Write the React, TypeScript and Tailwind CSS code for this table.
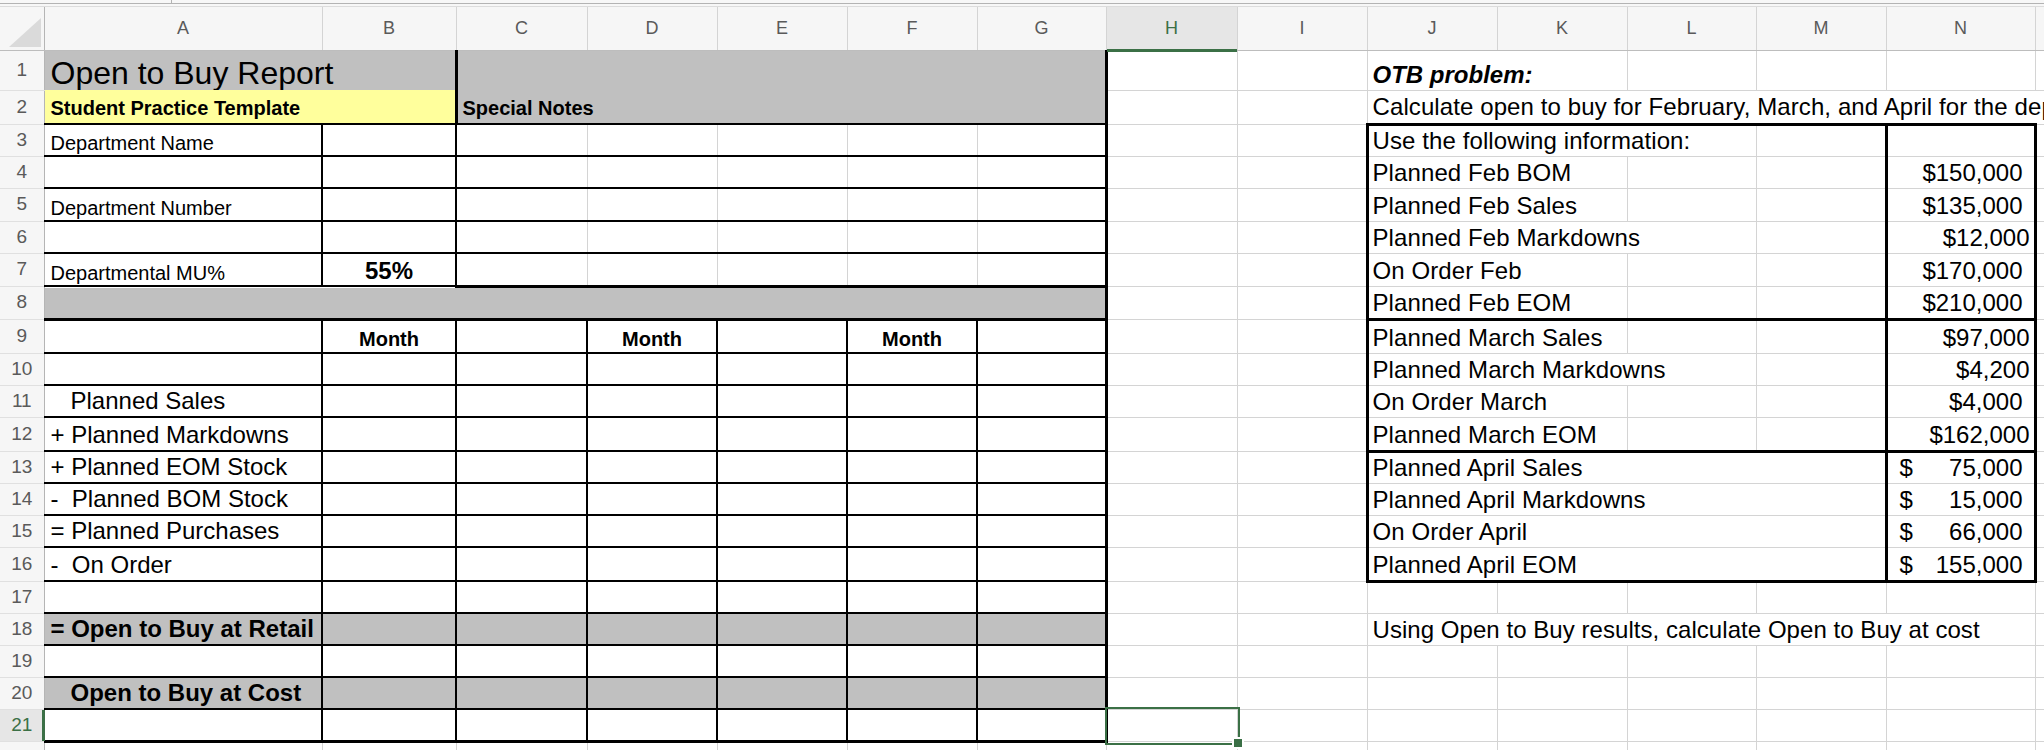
import React from "react";

const B2R = "border-r-2 border-r-black";
const B2B = "border-b-2 border-b-black";
const B3R = "border-r-[3px] border-r-black";
const B3B = "border-b-[3px] border-b-black";
const B3L = "border-l-[3px] border-l-black";
const B3T = "border-t-[3px] border-t-black";
const GRAY = "bg-[#c0c0c0]";

const COLS = [
  "w-[44px]", "w-[278px]", "w-[134px]", "w-[131px]", "w-[130px]", "w-[130px]", "w-[130px]", "w-[129px]",
  "w-[131px]", "w-[130px]", "w-[130px]", "w-[130px]", "w-[129px]", "w-[130px]", "w-[149px]", "w-[130px]",
];
const LETTERS = ["A", "B", "C", "D", "E", "F", "G", "H", "I", "J", "K", "L", "M", "N", "O"];
const ROW_H = [
  "h-[40px]", "h-[34px]", "h-[32px]", "h-[32px]", "h-[33px]", "h-[32px]", "h-[33px]", "h-[33px]", "h-[34px]", "h-[32px]", "h-[32px]",
  "h-[34px]", "h-[32px]", "h-[32px]", "h-[32px]", "h-[34px]", "h-[32px]", "h-[32px]", "h-[32px]", "h-[32px]", "h-[32px]", "h-[32px]",
];

const t20 = "text-[20px] leading-none pl-[6px] pb-[2px]";
const t24 = "text-[24px] leading-none pl-[6px] pb-[3px] whitespace-pre";
const t24b = "text-[24px] font-bold leading-none pl-[6px] pb-[3px] whitespace-pre";

type TdProps = { c?: string; span?: number; children?: React.ReactNode };

function Td({ c = "", span, children }: TdProps) {
  return (
    <td colSpan={span} className={`border border-[#d4d4d4] p-0 align-bottom whitespace-nowrap overflow-hidden ${c}`}>
      {children}
    </td>
  );
}

function RowHead({ n }: { n: number }) {
  const active = n === 21;
  return (
    <th
      className={`relative border border-[#e0e0e0] border-l-0 border-r-[#b5b5b5] p-0 text-center align-middle text-[19px] font-normal ${
        active ? "bg-[#e6e6e6] text-[#3b7046]" : "bg-[#f6f6f6] text-[#5a5a5a]"
      }`}
    >
      {n < 22 ? n : null}
      {active && <span className="absolute right-[-1px] top-0 bottom-0 w-[3px] bg-[#3b7046]" />}
    </th>
  );
}

type BoxRow = { label: string; span: number; value?: string; acct?: string; tight?: boolean; end?: boolean };

const BOX: BoxRow[] = [
  { label: "Use the following information:", span: 3 },
  { label: "Planned Feb BOM", span: 2, value: "$150,000" },
  { label: "Planned Feb Sales", span: 2, value: "$135,000" },
  { label: "Planned Feb Markdowns", span: 3, value: "$12,000", tight: true },
  { label: "On Order Feb", span: 2, value: "$170,000" },
  { label: "Planned Feb EOM", span: 2, value: "$210,000", end: true },
  { label: "Planned March Sales", span: 2, value: "$97,000", tight: true },
  { label: "Planned March Markdowns", span: 3, value: "$4,200", tight: true },
  { label: "On Order March", span: 2, value: "$4,000" },
  { label: "Planned March EOM", span: 2, value: "$162,000", tight: true, end: true },
  { label: "Planned April Sales", span: 4, acct: "75,000" },
  { label: "Planned April Markdowns", span: 4, acct: "15,000" },
  { label: "On Order April", span: 4, acct: "66,000" },
  { label: "Planned April EOM", span: 4, acct: "155,000", end: true },
];

function boxCells(i: number) {
  const r = BOX[i];
  const top = i === 0 ? B3T : "";
  const bot = r.end ? B3B : "";
  const rest = 4 - r.span;
  return (
    <>
      <Td span={r.span} c={`${B3L} ${top} ${bot} ${r.span === 4 ? B3R : ""}`}>
        <div className="text-[24px] tracking-[0.1px] leading-none pl-[4px] pb-[3px]">{r.label}</div>
      </Td>
      {Array.from({ length: rest }).map((_, k) => (
        <Td key={k} c={`${top} ${bot} ${k === rest - 1 ? B3R : ""}`} />
      ))}
      <Td c={`${B3R} ${top} ${bot}`}>
        {r.value && (
          <div className={`text-[24px] leading-none text-right pb-[3px] ${r.tight ? "pr-[4px]" : "pr-[11px]"}`}>{r.value}</div>
        )}
        {r.acct && (
          <div className="flex justify-between text-[24px] leading-none pb-[3px] pl-[12px] pr-[11px]">
            <span>$</span>
            <span>{r.acct}</span>
          </div>
        )}
      </Td>
      <Td />
    </>
  );
}

function plainRight(count: number) {
  return Array.from({ length: count }).map((_, k) => <Td key={`p${k}`} />);
}

function infoCells(label: string | null, val: React.ReactNode, last: boolean) {
  const bot = last ? B3B : B2B;
  return (
    <>
      <Td c={`${B2R} ${B2B}`}>{label && <div className={t20}>{label}</div>}</Td>
      <Td c={`${B2R} ${B2B}`}>{val}</Td>
      <Td c={bot} />
      <Td c={bot} />
      <Td c={bot} />
      <Td c={bot} />
      <Td c={`${bot} ${B3R}`} />
    </>
  );
}

const GRID_LABELS: Record<number, { text: string; bold?: boolean; fill?: boolean }> = {
  11: { text: "   Planned Sales" },
  12: { text: "+ Planned Markdowns" },
  13: { text: "+ Planned EOM Stock" },
  14: { text: "-  Planned BOM Stock" },
  15: { text: "= Planned Purchases" },
  16: { text: "-  On Order" },
  18: { text: "= Open to Buy at Retail", bold: true, fill: true },
  20: { text: "   Open to Buy at Cost", bold: true, fill: true },
};

function gridCells(n: number) {
  const lab = GRID_LABELS[n];
  const fill = lab?.fill ? GRAY : "";
  const bot = n === 21 ? B3B : B2B;
  const month = n === 9;
  const monthDiv = <div className="text-[20px] font-bold leading-none text-center pb-[3px]">Month</div>;
  return (
    <>
      <Td c={`${B2R} ${bot} ${fill}`}>{lab && <div className={lab.bold ? t24b : t24}>{lab.text}</div>}</Td>
      <Td c={`${B2R} ${bot} ${fill}`}>{month && monthDiv}</Td>
      <Td c={`${B2R} ${bot} ${fill}`} />
      <Td c={`${B2R} ${bot} ${fill}`}>{month && monthDiv}</Td>
      <Td c={`${B2R} ${bot} ${fill}`} />
      <Td c={`${B2R} ${bot} ${fill}`}>{month && monthDiv}</Td>
      <Td c={`${B3R} ${bot} ${fill}`} />
    </>
  );
}

function SelectedCell() {
  return (
    <td className="relative border border-[#d4d4d4] p-0">
      <div className="absolute left-[-3px] top-[-3px] right-[-3px] bottom-[-4px] z-10 border-2 border-[#3b7046]">
        <div className="absolute right-[-6px] bottom-[-6px] h-[12px] w-[12px] border-2 border-white bg-[#3b7046]" />
      </div>
    </td>
  );
}

function rightCells(n: number) {
  if (n === 1)
    return (
      <>
        <Td span={2}>
          <div className="text-[24px] font-bold italic leading-none pl-[5px] pb-[3px]">OTB problem:</div>
        </Td>
        {plainRight(4)}
      </>
    );
  if (n === 2)
    return (
      <Td span={6}>
        <div className="text-[24px] tracking-[0.1px] leading-none pl-[5px] pb-[4px]">
          Calculate open to buy for February, March, and April for the department
        </div>
      </Td>
    );
  if (n >= 3 && n <= 16) return boxCells(n - 3);
  if (n === 18)
    return (
      <>
        <Td span={5}>
          <div className="text-[24px] tracking-[0.05px] leading-none pl-[5px] pb-[3px]">
            Using Open to Buy results, calculate Open to Buy at cost
          </div>
        </Td>
        <Td />
      </>
    );
  return plainRight(6);
}

function leftCells(n: number) {
  if (n === 1)
    return (
      <>
        <Td span={2} c={`${GRAY} ${B3R} [border-bottom-style:hidden]`}>
          <div className="text-[32px] leading-none pl-[6px] pb-[1px]">Open to Buy Report</div>
        </Td>
        <Td span={5} c={`${GRAY} ${B3R} [border-bottom-style:hidden]`} />
      </>
    );
  if (n === 2)
    return (
      <>
        <Td span={2} c={`bg-[#ffff9c] ${B3R} ${B2B}`}>
          <div className="text-[20px] font-bold leading-none pl-[6px] pb-[5px]">Student Practice Template</div>
        </Td>
        <Td span={5} c={`${GRAY} ${B3R} ${B2B}`}>
          <div className="text-[20px] font-bold leading-none pl-[5px] pb-[5px]">Special Notes</div>
        </Td>
      </>
    );
  if (n === 3) return infoCells("Department Name", null, false);
  if (n === 4) return infoCells(null, null, false);
  if (n === 5) return infoCells("Department Number", null, false);
  if (n === 6) return infoCells(null, null, false);
  if (n === 7)
    return infoCells(
      "Departmental MU%",
      <div className="text-[24px] font-bold leading-none text-center pb-[2px]">55%</div>,
      true
    );
  if (n === 8) return <Td span={7} c={`${GRAY} ${B3B} ${B3R}`} />;
  if (n <= 21) return gridCells(n);
  return plainRight(7);
}

export default function App() {
  const rows = Array.from({ length: 22 }, (_, i) => i + 1);
  return (
    <div className="h-[750px] w-[2044px] overflow-hidden bg-white font-['Liberation_Sans',Arial,Helvetica,sans-serif] text-black">
      <div className="flex h-[7px] border-b border-[#dcdcdc] bg-[#f7f7f7]">
        <div className="h-[4px] w-[172px] border-r border-b border-[#b3b3b3]" />
        <div className="h-[4px] flex-1 border-b border-[#b3b3b3]" />
      </div>
      <table className="table-fixed border-collapse w-[2165px]">
        <colgroup>
          {COLS.map((w, i) => (
            <col key={i} className={w} />
          ))}
        </colgroup>
        <thead>
          <tr className="h-[43px]">
            <th className="border border-[#d4d4d4] border-t-0 border-l-0 border-b-[#bdbdbd] border-r-[#b5b5b5] bg-[#f6f6f6] p-0 align-bottom">
              <svg width="43" height="42" viewBox="0 0 43 42" className="block">
                <polygon points="41,10 41,39 9,39" fill="#dadada" />
              </svg>
            </th>
            {LETTERS.map((l) =>
              l === "H" ? (
                <th
                  key={l}
                  className="relative border border-[#d4d4d4] border-t-0 border-b-[#bdbdbd] bg-[#e6e6e6] p-0 text-center align-middle text-[18px] font-normal text-[#3b7046]"
                >
                  {l}
                  <span className="absolute left-0 right-0 bottom-[-2px] h-[3px] bg-[#3b7046]" />
                </th>
              ) : (
                <th
                  key={l}
                  className="border border-[#d4d4d4] border-t-0 border-b-[#bdbdbd] bg-[#f6f6f6] p-0 text-center align-middle text-[18px] font-normal text-[#5a5a5a]"
                >
                  {l}
                </th>
              )
            )}
          </tr>
        </thead>
        <tbody>
          {rows.map((n) => (
            <tr key={n} className={ROW_H[n - 1]}>
              <RowHead n={n} />
              {leftCells(n)}
              {n === 21 ? <SelectedCell /> : <Td />}
              <Td />
              {rightCells(n)}
            </tr>
          ))}
        </tbody>
      </table>
    </div>
  );
}
